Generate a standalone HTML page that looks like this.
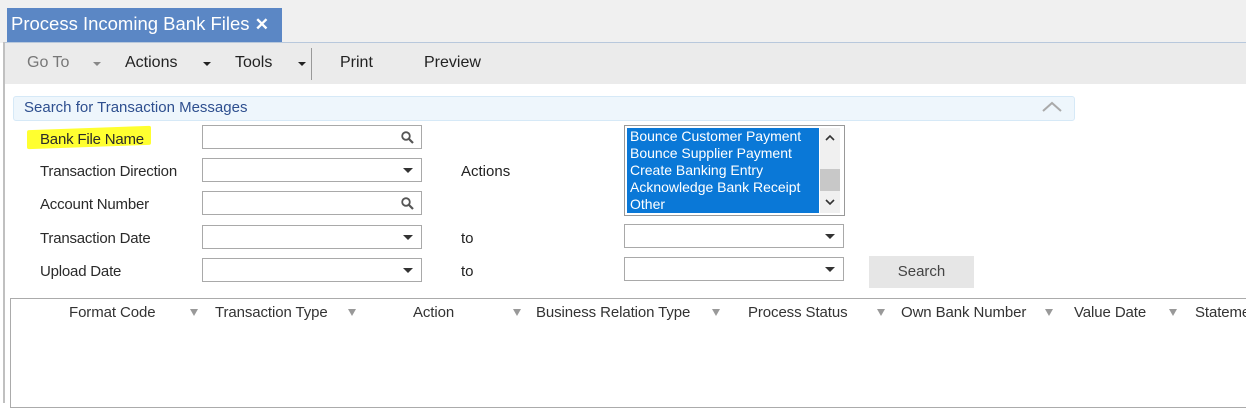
<!DOCTYPE html>
<html><head><style>
*{margin:0;padding:0;box-sizing:border-box}
body{width:1246px;height:403px;overflow:hidden;background:#fff;font-family:"Liberation Sans",sans-serif;font-size:15px;color:#222;position:relative}
.a{position:absolute;white-space:nowrap}
.inp{position:absolute;left:202px;width:220px;height:24px;border:1px solid #a9a9a9;background:#fff}
.dd::after{content:"";position:absolute;right:8px;top:9px;border-left:5px solid transparent;border-right:5px solid transparent;border-top:5px solid #333}
.lbl{position:absolute;left:40px;font-size:15px;color:#2a2a2a;letter-spacing:-0.2px}
.h{position:absolute;top:304px;font-size:15px;color:#333;letter-spacing:-0.1px}
.f{position:absolute;top:309px;width:0;height:0;border-left:4px solid transparent;border-right:4px solid transparent;border-top:7px solid #999}
</style></head><body>
<div class="a" style="left:0;top:0;width:1246px;height:43px;background:#f0f0f0"></div>
<div class="a" style="left:7px;top:8px;width:275px;height:35px;background:#5b87c5;color:#fff;font-size:18.5px;padding:5px 0 0 4px">Process Incoming Bank Files <b style="font-size:17px">✕</b></div>
<div class="a" style="left:4px;top:42px;width:1242px;height:42px;background:#ebebeb;border-top:1px solid #b8c8dc"></div>
<div class="a" style="left:3px;top:42px;width:2px;height:361px;background:#c0c0c0"></div>
<div class="a" style="left:27px;top:54px;font-size:16px;color:#777">Go To</div>
<div class="a" style="left:93px;top:62px;border-left:4px solid transparent;border-right:4px solid transparent;border-top:4px solid #888"></div>
<div class="a" style="left:125px;top:54px;font-size:16px">Actions</div>
<div class="a" style="left:203px;top:62px;border-left:4px solid transparent;border-right:4px solid transparent;border-top:4px solid #222"></div>
<div class="a" style="left:235px;top:54px;font-size:16px">Tools</div>
<div class="a" style="left:298px;top:62px;border-left:4px solid transparent;border-right:4px solid transparent;border-top:4px solid #222"></div>
<div class="a" style="left:311px;top:48px;width:1px;height:32px;background:#999"></div>
<div class="a" style="left:340px;top:54px;font-size:16px">Print</div>
<div class="a" style="left:424px;top:54px;font-size:16px">Preview</div>
<div class="a" style="left:13px;top:96px;width:1062px;height:25px;background:#eef6fc;border:1px solid #d6e9f7;border-radius:3px;color:#2e4f8f;font-size:15px;padding:2px 0 0 10px">Search for Transaction Messages</div>
<svg class="a" style="left:1041px;top:101px" width="22" height="12"><path d="M2 10 L11 2 L20 10" stroke="#aaa" stroke-width="2" fill="none"/></svg>
<div class="a" style="left:27px;top:128px;width:124px;height:19px;background:#ffff30;border-radius:2px;transform:skewY(-2deg)"></div>
<div class="lbl" style="top:131px">Bank File Name</div>
<div class="lbl" style="top:163px">Transaction Direction</div>
<div class="lbl" style="top:196px">Account Number</div>
<div class="lbl" style="top:230px">Transaction Date</div>
<div class="lbl" style="top:263px">Upload Date</div>
<div class="inp" style="top:125px"><svg style="position:absolute;right:7px;top:5px" width="13" height="13"><circle cx="5" cy="5" r="3.8" stroke="#555" stroke-width="1.8" fill="none"/><path d="M8 8 L12 12" stroke="#555" stroke-width="2.2"/></svg></div>
<div class="inp dd" style="top:158px"></div>
<div class="inp" style="top:191px"><svg style="position:absolute;right:7px;top:5px" width="13" height="13"><circle cx="5" cy="5" r="3.8" stroke="#555" stroke-width="1.8" fill="none"/><path d="M8 8 L12 12" stroke="#555" stroke-width="2.2"/></svg></div>
<div class="inp dd" style="top:225px"></div>
<div class="inp dd" style="top:258px"></div>
<div class="a" style="left:461px;top:163px">Actions</div>
<div class="a" style="left:461px;top:230px">to</div>
<div class="a" style="left:461px;top:263px">to</div>
<div class="a" style="left:624px;top:125px;width:221px;height:91px;border:1px solid #999;background:#fff">
<div style="position:absolute;left:2px;top:2px;width:192px;height:85px;background:#0a78d7;color:#fff;font-size:14px;line-height:17px;padding-left:3px">Bounce Customer Payment<br>Bounce Supplier Payment<br>Create Banking Entry<br>Acknowledge Bank Receipt<br>Other</div>
<div style="position:absolute;left:195px;top:2px;width:20px;height:85px;background:#f0f0f0"></div>
<div style="position:absolute;left:195px;top:43px;width:20px;height:22px;background:#c8c8c8"></div>
<svg style="position:absolute;left:199px;top:8px" width="12" height="8"><path d="M2 6 L6 2 L10 6" stroke="#333" stroke-width="1.6" fill="none"/></svg>
<svg style="position:absolute;left:199px;top:72px" width="12" height="8"><path d="M2 2 L6 6 L10 2" stroke="#333" stroke-width="1.6" fill="none"/></svg>
</div>
<div class="inp dd" style="left:624px;top:224px"></div>
<div class="inp dd" style="left:624px;top:257px"></div>
<div class="a" style="left:869px;top:256px;width:105px;height:32px;background:#e6e6e6;color:#444;font-size:15px;text-align:center;padding-top:7px">Search</div>
<div class="a" style="left:10px;top:298px;width:1240px;height:110px;border:1px solid #ababab"></div>
<div class="h" style="left:69px">Format Code</div><div class="f" style="left:190px"></div>
<div class="h" style="left:215px">Transaction Type</div><div class="f" style="left:348px"></div>
<div class="h" style="left:413px">Action</div><div class="f" style="left:513px"></div>
<div class="h" style="left:536px">Business Relation Type</div><div class="f" style="left:712px"></div>
<div class="h" style="left:748px">Process Status</div><div class="f" style="left:877px"></div>
<div class="h" style="left:901px">Own Bank Number</div><div class="f" style="left:1045px"></div>
<div class="h" style="left:1074px">Value Date</div><div class="f" style="left:1169px"></div>
<div class="h" style="left:1195px">Statement</div>
</body></html>
